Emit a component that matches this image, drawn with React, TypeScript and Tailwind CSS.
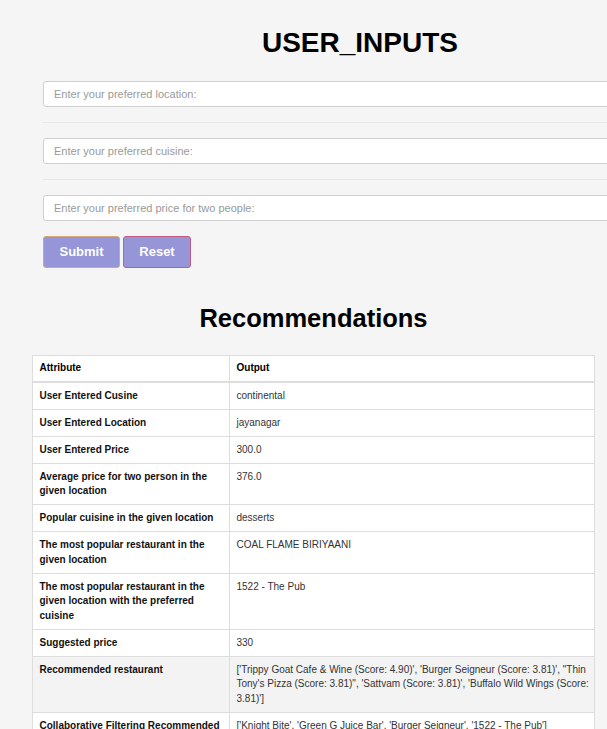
import React from 'react';

const rows: [string, string][] = [
  ['User Entered Cusine', 'continental'],
  ['User Entered Location', 'jayanagar'],
  ['User Entered Price', '300.0'],
  ['Average price for two person in the given location', '376.0'],
  ['Popular cuisine in the given location', 'desserts'],
  ['The most popular restaurant in the given location', 'COAL FLAME BIRIYAANI'],
  ['The most popular restaurant in the given location with the preferred cuisine', '1522 - The Pub'],
  ['Suggested price', '330'],
  [
    'Recommended restaurant',
    "['Trippy Goat Cafe & Wine (Score: 4.90)', 'Burger Seigneur (Score: 3.81)', \"Thin Tony's Pizza (Score: 3.81)\", 'Sattvam (Score: 3.81)', 'Buffalo Wild Wings (Score: 3.81)']",
  ],
  [
    'Collaborative Filtering Recommended Restaurants',
    "['Knight Bite', 'Green G Juice Bar', 'Burger Seigneur', '1522 - The Pub']",
  ],
];

const placeholders = [
  'Enter your preferred location:',
  'Enter your preferred cuisine:',
  'Enter your preferred price for two people:',
];

const App: React.FC = () => (
  <div
    className="w-[607px] min-h-screen overflow-hidden bg-[#f5f5f5] text-black"
    style={{ fontFamily: '"Liberation Sans", Arial, sans-serif' }}
  >
    <form className="w-[720px] px-[43px] pt-[29px]" onSubmit={e => e.preventDefault()}>
      <h1 className="text-center text-[28px] font-bold leading-none">USER_INPUTS</h1>
      <div className="mt-[24px] flex flex-col">
        {placeholders.map((p, i) => (
          <React.Fragment key={p}>
            {i > 0 && <hr className="my-[15px] border-0 border-t border-[#e8e8e8]" />}
            <input
              type="text"
              placeholder={p}
              className="h-[26px] w-full rounded-[3px] border border-[#d0d0d0] bg-white px-[10px] text-[11px] text-[#333] placeholder:text-[#9a9a9a] outline-none"
            />
          </React.Fragment>
        ))}
      </div>
      <div className="mt-[15px] flex gap-[3px]">
        <button
          type="submit"
          className="h-[32px] w-[77px] rounded-[3px] border border-[#d6a878] bg-[#9595d8] text-[13px] font-bold text-white"
        >
          Submit
        </button>
        <button
          type="reset"
          className="h-[32px] w-[68px] rounded-[3px] border border-[#c45c82] bg-[#9595d8] text-[13px] font-bold text-white"
        >
          Reset
        </button>
      </div>
    </form>

    <section className="w-[627px] px-[32px] pt-[38px] pb-8">
      <h2 className="text-center text-[25.5px] font-bold leading-none">Recommendations</h2>
      <table className="mt-[23px] w-full table-fixed border-collapse border border-[#dddddd] bg-white text-[10px] leading-[14.5px]">
        <colgroup>
          <col className="w-[197px]" />
          <col />
        </colgroup>
        <thead>
          <tr className="border-b-2 border-[#dddddd]">
            <th className="border-r border-[#dddddd] px-[6.5px] pt-[5.5px] pb-[5px] text-left font-bold">Attribute</th>
            <th className="pl-[6.5px] pr-0 pt-[5.5px] pb-[5px] text-left font-bold">Output</th>
          </tr>
        </thead>
        <tbody>
          {rows.map(([k, v]) => (
            <tr
              key={k}
              className={`border-t border-[#dddddd] align-top ${k === 'Recommended restaurant' ? 'bg-[#f3f3f3]' : ''}`}
            >
              <td className="border-r border-[#dddddd] px-[6.5px] pt-[6px] pb-[5.5px] font-bold text-[#111]">{k}</td>
              <td className="pl-[6.5px] pr-0 pt-[6px] pb-[5.5px] text-[#333]">{v}</td>
            </tr>
          ))}
        </tbody>
      </table>
    </section>
  </div>
);

export default App;
